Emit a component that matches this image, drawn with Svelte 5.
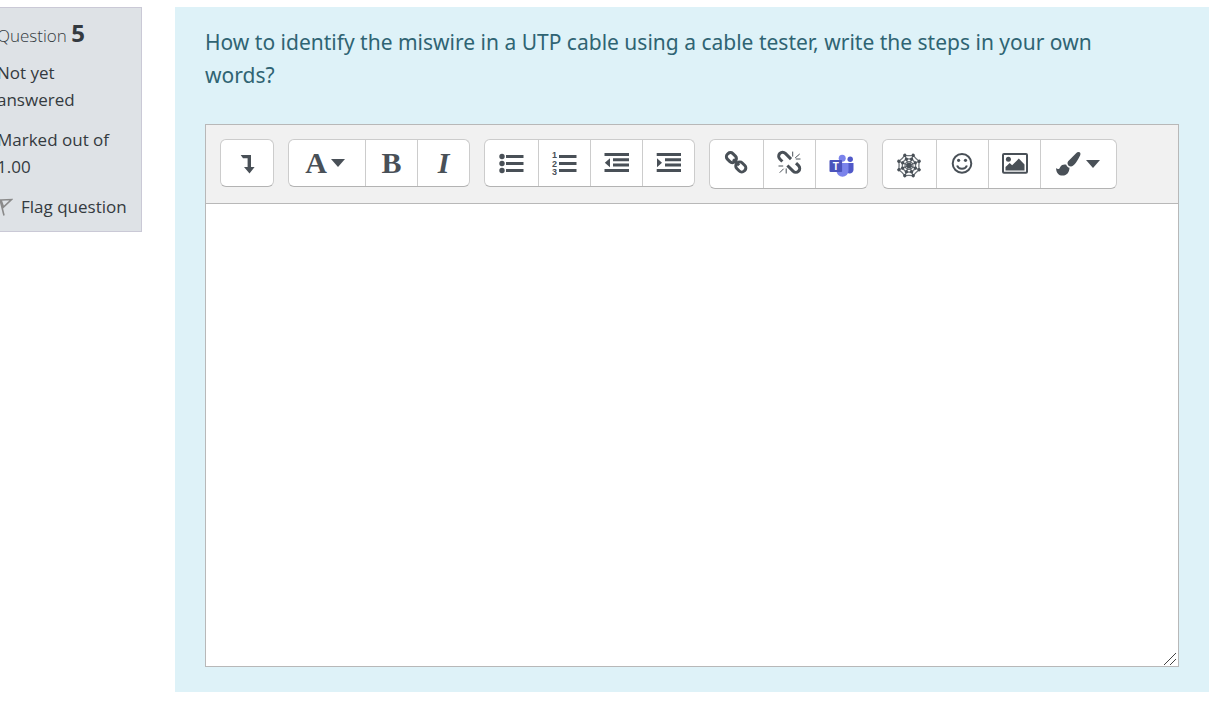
<script>
  let { number = 5, maxMark = '1.00' } = $props();

  let answer = $state('');
  let flagged = $state(false);

  const groups = [
    { items: [{ id: 'toggle', label: 'Show more buttons' }] },
    {
      items: [
        { id: 'styles', label: 'Paragraph styles', letter: 'A', menu: true },
        { id: 'bold', label: 'Bold', letter: 'B' },
        { id: 'italic', label: 'Italic', letter: 'I' }
      ]
    },
    {
      items: [
        { id: 'ul', label: 'Unordered list' },
        { id: 'ol', label: 'Ordered list' },
        { id: 'outdent', label: 'Outdent' },
        { id: 'indent', label: 'Indent' }
      ]
    },
    {
      tall: true,
      items: [
        { id: 'link', label: 'Link' },
        { id: 'unlink', label: 'Unlink' },
        { id: 'teams', label: 'Teams meeting' }
      ]
    },
    {
      tall: true,
      items: [
        { id: 'web', label: 'Insert diagram' },
        { id: 'emoji', label: 'Emoji picker' },
        { id: 'image', label: 'Insert or edit image' },
        { id: 'brush', label: 'Font colour', menu: true }
      ]
    }
  ];

  const spokes = [0, 45, 90, 135, 180, 225, 270, 315];
</script>

{#snippet icon(id)}
  <svg class="icon" viewBox="0 0 28 28" aria-hidden="true">
    {#if id === 'toggle'}
      <path d="M7.7 6H18v12h3.6l-5.1 6.5L11 18h3.6V9.2H10z" />
    {:else if id === 'ul'}
      {#each [7.5, 14.5, 21.5] as y}
        <circle cx="4" cy={y} r="2.7" />
        <rect x="8" y={y - 1.5} width="17.5" height="3" />
      {/each}
    {:else if id === 'ol'}
      {#each [7.5, 14.5, 21.5] as y, i}
        <text class="digit" x="1" y={9 + i * 8.5}>{i + 1}</text>
        <rect x="8" y={y - 1.5} width="17.5" height="3" />
      {/each}
    {:else if id === 'outdent'}
      <path d="M1.5 4H26v3H1.5zM10 9.3h16v3H10zM10 14.6h16v3H10zM1.5 20H26v3H1.5zM7 9.3v9l-5.2-4.5z" />
    {:else if id === 'indent'}
      <path d="M1.7 4H26v3H1.7zM10 9.3h16v3H10zM10 14.6h16v3H10zM1.7 20H26v3H1.7zM2 9.3v9l5-4.5z" />
    {:else if id === 'link'}
      <g class="stroke thick">
        <rect x="-5.2" y="-3.9" width="10.4" height="7.8" rx="3.4" transform="translate(8.4 7.6) rotate(45)" />
        <rect x="-5.2" y="-3.9" width="10.4" height="7.8" rx="3.4" transform="translate(17.8 17) rotate(45)" />
        <path d="M10.1 9.3l6 6" />
      </g>
    {:else if id === 'unlink'}
      <g class="stroke thick">
        <path d="M6-3.9H-2a3.9 3.9 0 0 0 0 7.8h3.6" transform="translate(8 7.6) rotate(45)" />
        <path d="M-6 3.9H2a3.9 3.9 0 0 0 0-7.8h-3.6" transform="translate(18.4 17) rotate(45)" />
      </g>
      <path class="stroke ray" d="M16.7 1.6v5M23.7 4l-4.6 4M24.5 9h-4.7M2.5 16h4.7M3.7 22.7l4-4M10.2 23.5v-5" />
    {:else if id === 'teams'}
      <g>
        <circle cx="14.2" cy="8.3" r="3.5" fill="#7b83eb" />
        <circle cx="22.2" cy="9.3" r="2.7" fill="#5059c9" />
        <path d="M17.5 13h8v6.5a4.2 4.2 0 0 1-8 1.6z" fill="#5059c9" />
        <path d="M8.5 13h12v7.8a6 6 0 0 1-12 0z" fill="#7b83eb" />
        <rect x="1.5" y="10" width="12.6" height="12" rx="1" fill="#4b53bc" />
        <text class="badge" x="7.8" y="20">T</text>
      </g>
    {:else if id === 'web'}
      <g transform="translate(13 15.5)">
        {#each spokes as angle}
          <g transform="rotate({angle + 22.5})">
            <path class="stroke web" d="M0 0V-12M0-11Q4.2-8.6 7.8-7.8M0-7.5Q2.7-5.5 5.3-5.3M0-4.2L3-3" />
            <circle cy="-11" r="1.7" />
            <circle cy="-6.8" r="1.6" />
          </g>
        {/each}
        <circle r="2.8" />
      </g>
    {:else if id === 'emoji'}
      <circle class="stroke" cx="13" cy="13.4" r="9.3" />
      <circle cx="9.6" cy="10.3" r="1.6" />
      <circle cx="16.5" cy="10.3" r="1.6" />
      <path class="stroke" d="M8.1 15.5c1.6 4.3 8.2 4.3 9.8 0" />
    {:else if id === 'image'}
      <rect class="stroke" x="2" y="4" width="24" height="18.8" rx="1" />
      <circle cx="7.4" cy="9.2" r="2.5" />
      <path d="M4.5 20.5V17l4.2-4 2.4 2.3 6.7-6.7 5.7 6v5.9z" />
    {:else if id === 'brush'}
      <path d="M24.6 2c1.7 0 2.3 1.6 1.6 3.2-1.5 3.4-4.6 8.5-7 10.4-2 1.6-4.7.8-5.5-1.4-.5-1.5 0-2.7 1.2-3.8l7.2-7.2c.7-.7 1.5-1.2 2.5-1.2z" />
      <path d="M12.3 14.8c.6 1.8 1.7 2.7 3.2 3-.2 4.6-2.7 7.8-6.8 7.8-4.2 0-6.6-3-6.6-7.7.8.5 1.7 1.3 2.5 1.2.9-.1 1.2-1.3 1.8-2.3 1.2-1.9 3.3-2.6 5.9-2z" />
    {/if}
  </svg>
{/snippet}

<main class="question">
  <aside class="info">
    <h3>Question <span class="qno">{number}</span></h3>
    <p>Not yet answered</p>
    <p>Marked out of {maxMark}</p>
    <button class="flag" aria-pressed={flagged} onclick={() => (flagged = !flagged)}>
      <svg viewBox="0 0 16 20" aria-hidden="true">
        <path d="M3 2.5l4 16M4 3l10.5-.5L6.5 10z" />
      </svg>
      <span>Flag question</span>
    </button>
  </aside>

  <section class="content">
    <label class="qtext" for="answer">
      How to identify the miswire in a UTP cable using a cable tester, write the steps in your own words?
    </label>

    <div class="editor">
      <div class="toolbar" role="toolbar" aria-label="Editor">
        {#each groups as group}
          <div class="group" class:tall={group.tall}>
            {#each group.items as item}
              <button class="tool" class:wide={item.menu} aria-label={item.label} title={item.label}>
                {#if item.letter}
                  <span class="letter" class:italic={item.id === 'italic'}>{item.letter}</span>
                {:else}
                  {@render icon(item.id)}
                {/if}
                {#if item.menu}
                  <svg class="caret" viewBox="0 0 14 8" aria-hidden="true"><path d="M0 0h14L7 8z" /></svg>
                {/if}
              </button>
            {/each}
          </div>
        {/each}
      </div>
      <textarea id="answer" rows="15" bind:value={answer}></textarea>
    </div>
  </section>
</main>

<style>
  :global(body) {
    background: #fff;
    overflow-x: hidden;
  }

  .question {
    display: flex;
    align-items: flex-start;
    gap: 33px;
    padding: 7px 23px 18px 0;
    font-family: "Noto Sans", "Open Sans", sans-serif;
    color: #343a40;
  }

  .info {
    box-sizing: border-box;
    flex: 0 0 156px;
    margin-left: -14px;
    padding: 10px 10px 11px;
    background: #dee2e6;
    border: 1px solid #cac9d6;
    font-family: "Open Sans", "Noto Sans", sans-serif;
    font-size: 17px;
    line-height: 27px;
  }

  h3 {
    margin: 0 0 5px;
    font-size: 17px;
    font-weight: 300;
    line-height: 36px;
    white-space: nowrap;
  }

  .qno {
    font-size: 24px;
    font-weight: 700;
    line-height: 24px;
  }

  p {
    margin: 0 0 13px;
  }

  .flag {
    display: flex;
    align-items: center;
    gap: 8px;
    padding: 0;
    border: 0;
    background: none;
    color: inherit;
    font: inherit;
    white-space: nowrap;
    cursor: pointer;
  }

  .flag svg {
    width: 16px;
    height: 20px;
    fill: none;
    stroke: #8a8a8a;
    stroke-width: 1.6;
  }

  .content {
    flex: 1;
    min-width: 0;
    padding: 19px 30px 25px;
    background: #def2f8;
  }

  .qtext {
    display: block;
    margin-bottom: 32px;
    padding-right: 40px;
    color: #2f6473;
    font-size: 21px;
    line-height: 33px;
  }

  .editor {
    border: 1px solid #b8b8b8;
    background: #fff;
  }

  .toolbar {
    display: flex;
    flex-wrap: wrap;
    align-items: flex-start;
    gap: 14px;
    padding: 14px;
    background: #f1f1f1;
    border-bottom: 1px solid #b8b8b8;
  }

  .group {
    display: flex;
    height: 46px;
    background: #fff;
    border: 1px solid #ccc;
    border-bottom-color: #b3b3b3;
    border-radius: 6px;
  }

  .group.tall {
    height: 48px;
  }

  .tool {
    display: flex;
    align-items: center;
    justify-content: center;
    box-sizing: border-box;
    width: 52px;
    padding: 0;
    border: 0;
    background: none;
    color: #495057;
    cursor: pointer;
  }

  .tool:first-child:not(:last-child) {
    width: 53px;
  }

  .tool + .tool {
    border-left: 1px solid #ccc;
  }

  .tool.wide,
  .tool.wide:first-child:not(:last-child) {
    gap: 4px;
    width: 76px;
    padding-right: 4px;
  }

  .tool:hover {
    background: #f4f4f4;
  }

  .letter {
    font-family: "Liberation Serif", serif;
    font-size: 30px;
    font-weight: 700;
    line-height: 30px;
  }

  .italic {
    font-style: italic;
  }

  .icon {
    width: 28px;
    height: 28px;
    fill: currentColor;
  }

  .caret {
    width: 14px;
    height: 8px;
    fill: currentColor;
  }

  .stroke {
    fill: none;
    stroke: currentColor;
    stroke-width: 2;
  }

  .thick {
    stroke-width: 3;
  }

  .ray {
    stroke-width: 1;
  }

  .web {
    stroke-width: 1.3;
    opacity: 0.8;
  }

  .digit {
    font-family: "Liberation Sans", sans-serif;
    font-size: 9px;
    font-weight: 700;
  }

  .badge {
    fill: #fff;
    font-family: "Liberation Sans", sans-serif;
    font-size: 10px;
    font-weight: 700;
    text-anchor: middle;
  }

  textarea {
    display: block;
    box-sizing: border-box;
    width: 100%;
    height: 462px;
    padding: 12px;
    border: 0;
    outline: 0;
    background: #fff;
    color: #343a40;
    font: inherit;
    line-height: 27px;
    resize: vertical;
  }

  textarea::-webkit-scrollbar {
    width: 16px;
    height: 16px;
  }

  textarea::-webkit-resizer {
    background: url("data:image/svg+xml,%3Csvg xmlns='http://www.w3.org/2000/svg' width='16' height='16'%3E%3Cpath d='M1 14L13 2M7 14l6-6' stroke='%23444'/%3E%3C/svg%3E") no-repeat;
  }
</style>
